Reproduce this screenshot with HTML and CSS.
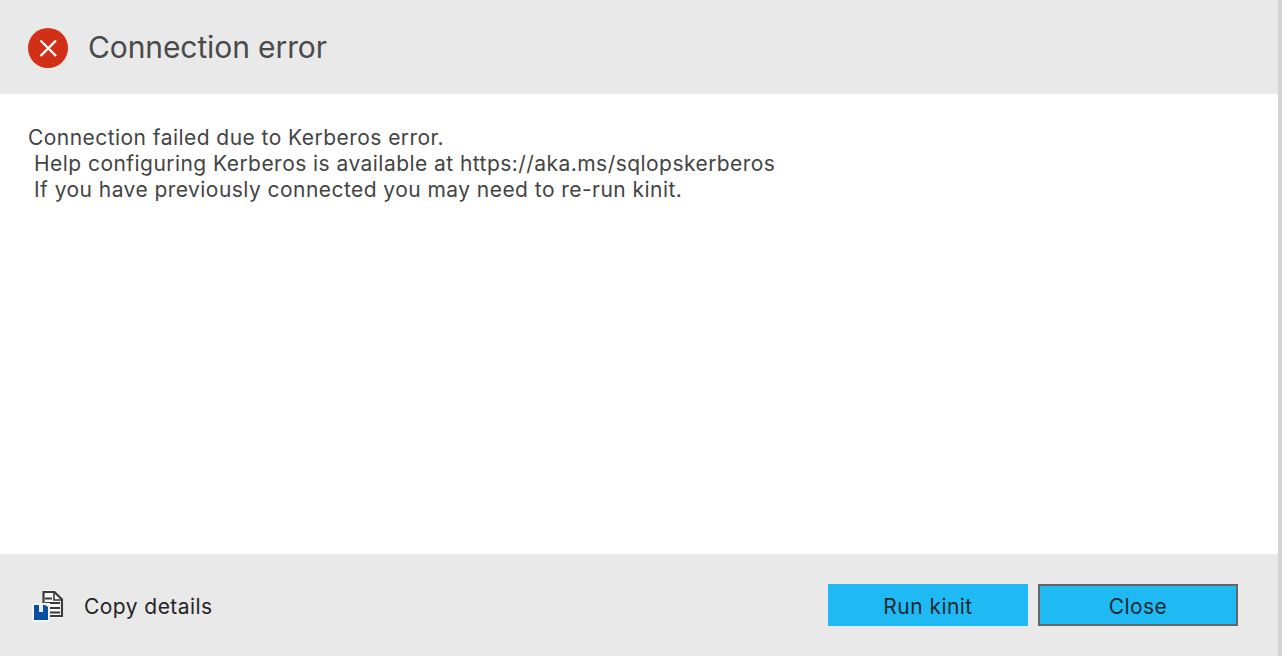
FILE: index.html
```html
<!DOCTYPE html>
<html lang="en">
  <head>
    <meta charset="UTF-8" />
    <title>Connection error</title>
    <link rel="stylesheet" href="styles.css">
  </head>
  <body>
    <div class="dialog">
      <!-- Header -->
      <div class="dialogHeader">
        <svg class="errorIcon" width="40" height="40" viewBox="0 0 40 40">
          <circle cx="20" cy="20" r="20" fill="#d22f17" />
          <path d="M12.5 12.5 L28 28 M28 12.5 L12.5 28" stroke="#fff" stroke-width="2.4" fill="none" />
        </svg>
        <div class="dialogTitle">Connection error</div>
      </div>

      <!-- Message -->
      <div class="dialogBody">
        <div>Connection failed due to Kerberos error.</div>
        <div class="indented">Help configuring Kerberos is available at https://aka.ms/sqlopskerberos</div>
        <div class="indented">If you have previously connected you may need to re-run kinit.</div>
      </div>

      <!-- Footer -->
      <div class="dialogFooter">
        <div class="copyDetails">
          <svg class="copyIcon" width="32" height="32" viewBox="0 0 32 32">
            <path d="M10 0 H23 L32 9 V28 H10 Z" fill="#f8f8f8" />
            <path d="M11.5 2 H22.5 L30 9.5 V26 H11.5 Z" fill="#f8f8f8" stroke="#3a3a3a" stroke-width="2.2" />
            <path d="M22 2 V10 H30" fill="none" stroke="#3a3a3a" stroke-width="1.6" />
            <path d="M13 8.5 H20 M13 13 H28 M13 18 H28 M13 22.5 H28" stroke="#3a3a3a" stroke-width="1.8" />
            <rect x="0" y="13" width="18" height="19" fill="#f4f4f4" />
            <path d="M2 15 H13 L16 17 V30 H2 Z" fill="#0a4fa0" />
            <rect x="7" y="15" width="4" height="7" fill="#e8eef5" />
          </svg>
          <span>Copy details</span>
        </div>
        <div class="footerButtons">
          <button class="btn">Run kinit</button>
          <button class="btn focused">Close</button>
        </div>
      </div>
    </div>
  </body>
</html>
```

FILE: styles.css
```css
/* ============ Base Layout ============ */
html,
body {
  height: 100%;
  margin: 0;
  overflow: hidden;
  font-family: Inter, "Noto Sans", sans-serif;
  background: #d4d4d4;
}

.dialog {
  display: flex;
  flex-direction: column;
  width: 1278px;
  height: 656px;
  background: #fff;
}

/* ============ Header ============ */
.dialogHeader {
  box-sizing: border-box;
  flex: 0 0 94px;
  display: flex;
  align-items: center;
  gap: 20px;
  padding-left: 28px;
  background: #e9e9ea;
}

.errorIcon {
  flex: none;
  margin-top: 2px;
}

.dialogTitle {
  font-size: 30px;
  letter-spacing: -0.1px;
  color: #4a4a4a;
}

/* ============ Message ============ */
.dialogBody {
  flex: 1 1 auto;
  padding: 31px 28px 0;
  font-size: 21px;
  letter-spacing: 0.45px;
  line-height: 26px;
  color: #444;
}

.indented {
  padding-left: 6px;
}

/* ============ Footer ============ */
.dialogFooter {
  flex: 0 0 102px;
  display: flex;
  align-items: center;
  justify-content: space-between;
  padding: 0 40px 0 32px;
  background: #e9e9ea;
}

.copyDetails {
  display: flex;
  align-items: center;
  gap: 20px;
  padding-top: 2px;
  font-size: 21px;
  letter-spacing: 0.45px;
  color: #252525;
}

.footerButtons {
  display: flex;
  gap: 10px;
}

.btn {
  box-sizing: border-box;
  width: 200px;
  height: 42px;
  border: none;
  padding: 2px 0 0;
  font-family: inherit;
  font-size: 21px;
  letter-spacing: 0.45px;
  color: #1a2a33;
  background: #1fbaf3;
}

.btn.focused {
  border: 2px solid #666;
}
```
